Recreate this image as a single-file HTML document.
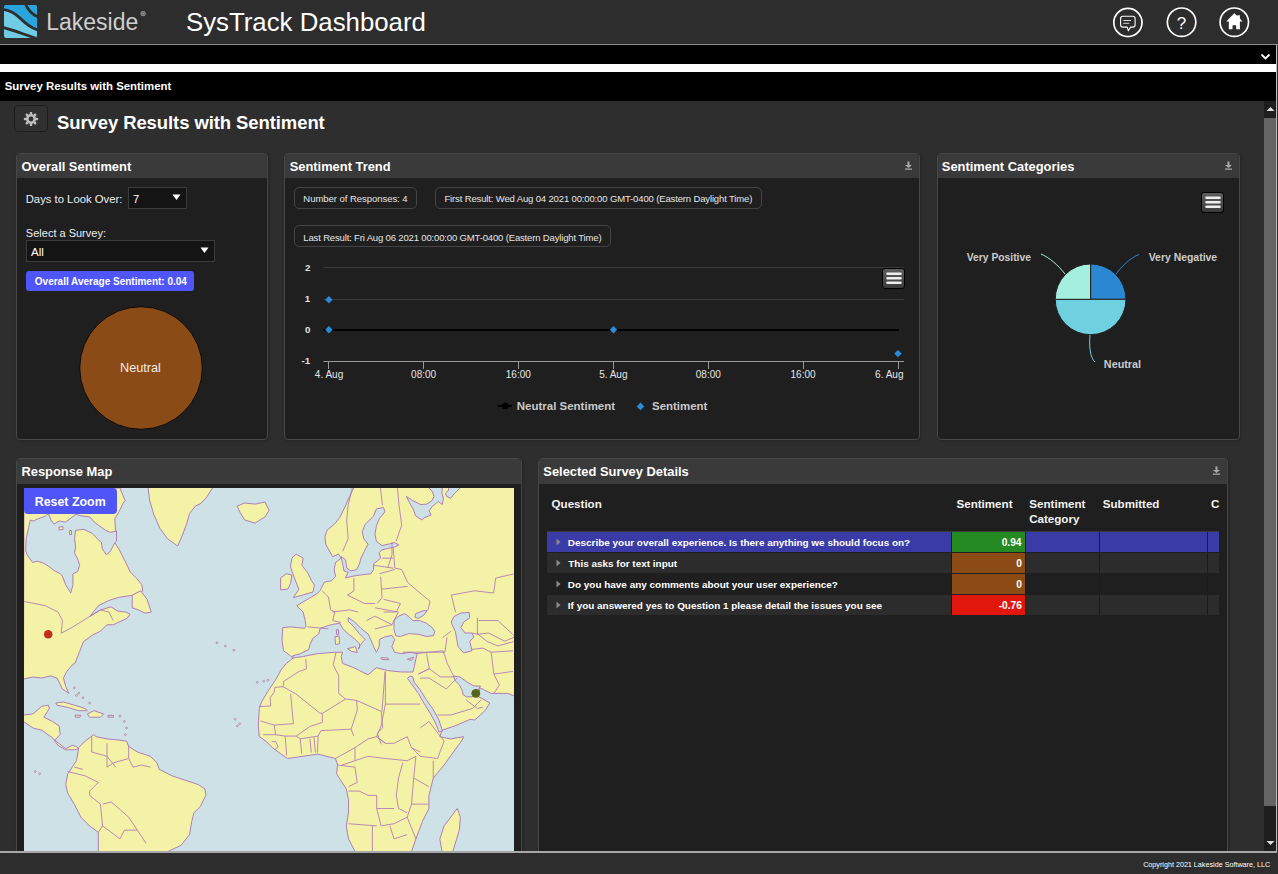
<!DOCTYPE html>
<html><head><meta charset="utf-8">
<style>
*{box-sizing:border-box;margin:0;padding:0}
html,body{width:1278px;height:874px;overflow:hidden;background:#2e2e2e;font-family:"Liberation Sans",sans-serif;color:#fff}
.a{position:absolute}
.panel{position:absolute;border:1px solid #474747;border-radius:4px;background:#1f1f1f;overflow:hidden;box-shadow:1px 1px 3px rgba(0,0,0,0.22)}
.ph{position:absolute;left:0;top:0;right:0;height:24px;background:#3a3a3a}
.pill{position:absolute;height:22px;border:1px solid #444;border-radius:5px}
.sel{position:absolute;background:#141414;border:1px solid #3c3c3c}
</style></head><body>
<div class="a" style="left:0;top:0;width:1278px;height:44px;background:#2d2d2d"></div>
<div class="a" style="left:0;top:44px;width:1278px;height:1px;background:#8c8c8c"></div>
<div class="a" style="left:0;top:45px;width:1276px;height:19px;background:#000"></div>
<div class="a" style="left:0;top:64px;width:1277px;height:8px;background:#fff"></div>
<div class="a" style="left:0;top:72px;width:1276px;height:29px;background:#000"></div>
<div class="a" style="left:1276px;top:45px;width:1px;height:807px;background:#bdbdbd"></div>
<div class="a" style="left:0;top:851px;width:1277px;height:2px;background:#a8a8a8"></div>
<div class="a" style="left:0;top:853px;width:1278px;height:21px;background:#2d2d2d"></div>

<svg class="a" style="left:4px;top:5px" width="34" height="34" viewBox="0 0 34 34">
  <defs><clipPath id="lc"><rect x="0" y="0" width="33" height="33" rx="2.5"/></clipPath></defs>
  <g clip-path="url(#lc)">
    <rect x="0" y="0" width="33" height="33" fill="#70cbe4"/>
    <path d="M-1 -1 H34 V25 C27 23 22 19 17 14 C12 9 6 5 -1 4.5 Z" fill="#2aa4dd"/>
    <path d="M-1 4.5 C6 5 12 9 17 14 C22 19 27 23 34 25" stroke="#2d2d2d" stroke-width="2.8" fill="none"/>
    <path d="M21.5 -1 C23.5 4 27.5 9 34 12" stroke="#2d2d2d" stroke-width="2.8" fill="none"/>
    <path d="M-1 22.5 C10 25 21 30 34 33.8" stroke="#2d2d2d" stroke-width="2.8" fill="none"/>
  </g>
</svg>
<svg class="a" style="left:139px;top:9px" width="9" height="9"><circle cx="4.1" cy="4.6" r="2.6" fill="#8e8e8e"/><circle cx="4.1" cy="4.6" r="1.3" fill="none" stroke="#555" stroke-width="0.6"/></svg>

<svg class="a" style="left:1112px;top:7px" width="140" height="32" viewBox="0 0 140 32">
  <circle cx="15.9" cy="15.5" r="14.1" stroke="#fff" stroke-width="1.7" fill="none"/>
  <path d="M10.9 9.2 h9.9 a2.3 2.3 0 0 1 2.3 2.3 v6.3 a2.3 2.3 0 0 1 -2.3 2.3 h-2.2 l-2.3 3.4 l-1.2 -3.4 h-4.2 a2.3 2.3 0 0 1 -2.3 -2.3 v-6.3 a2.3 2.3 0 0 1 2.3 -2.3z" stroke="#fff" stroke-width="1.1" fill="none"/>
  <path d="M11.3 13.5h7.8 M11.3 16.3h6" stroke="#ddd" stroke-width="1"/>
  <circle cx="69.6" cy="15.2" r="14.2" stroke="#fff" stroke-width="1.7" fill="none"/>
  <text x="69.6" y="21.9" text-anchor="middle" font-family="Liberation Sans" font-size="17" fill="#fff">?</text>
  <circle cx="122.3" cy="15.2" r="14.2" stroke="#fff" stroke-width="1.7" fill="none"/>
  <path d="M122.3 6.3 L125.3 9.1 V8.2 H127.9 V11.5 L130.5 14.5 H127.9 V22.3 H124.2 V18.6 Q122.3 17.4 120.5 18.6 V22.3 H116.8 V14.5 H114.2 Z" fill="#fff"/>
</svg>
<svg class="a" style="left:1260px;top:53px" width="11" height="8" viewBox="0 0 11 8"><path d="M1.5 1.5 L5.5 5.5 L9.5 1.5" stroke="#fff" stroke-width="1.8" fill="none"/></svg>

<div class="a" style="left:0;top:101px;width:1276px;height:750px;overflow:hidden">
<div class="a" style="left:0;top:-101px;width:1276px;height:851px">
<!-- scrollbar -->
<div class="a" style="left:1264px;top:101px;width:12px;height:750px;background:#1e1e1e"></div>
<div class="a" style="left:1264px;top:118px;width:12px;height:688px;background:#646464"></div>
<svg class="a" style="left:1265px;top:104px" width="11" height="10"><path d="M1.5 7 L5.5 3 L9.5 7Z" fill="#ddd"/></svg>
<svg class="a" style="left:1265px;top:838px" width="11" height="10"><path d="M1.5 3 L5.5 7 L9.5 3Z" fill="#ddd"/></svg>

<div class="a" style="left:14px;top:105px;width:34px;height:27px;border:1px solid #1c1c1c;border-radius:4px;background:#303030"></div>
<svg class="a" style="left:22px;top:110px" width="18" height="18" viewBox="0 0 18 18">
  <g transform="translate(9,9)" fill="#bfbfbf">
    <circle r="4.9"/>
    <g id="tooth"><rect x="-1.2" y="-7.1" width="2.4" height="3.2" rx="0.6"/></g>
    <use href="#tooth" transform="rotate(45)"/><use href="#tooth" transform="rotate(90)"/><use href="#tooth" transform="rotate(135)"/>
    <use href="#tooth" transform="rotate(180)"/><use href="#tooth" transform="rotate(225)"/><use href="#tooth" transform="rotate(270)"/><use href="#tooth" transform="rotate(315)"/>
    <circle r="2.4" fill="#303030"/>
  </g>
</svg>

<div class="panel" style="left:16px;top:153px;width:252px;height:287px"><div class="ph"></div></div>
<div class="panel" style="left:284px;top:153px;width:636px;height:287px"><div class="ph"></div></div>
<div class="panel" style="left:937px;top:153px;width:303px;height:287px"><div class="ph"></div></div>
<div class="panel" style="left:16px;top:458px;width:506px;height:430px"><div class="ph" style="height:25px"></div></div>
<div class="panel" style="left:538px;top:458px;width:690px;height:430px"><div class="ph" style="height:25px"></div></div>
<svg class="a" style="left:904px;top:161px" width="9" height="9"><path d="M3.5 0.5h2v3.5h2.5l-3.5 3l-3.5-3h2.5z M1 7.5h7v1.3h-7z" fill="#a8a8a8"/></svg><svg class="a" style="left:1224px;top:161px" width="9" height="9"><path d="M3.5 0.5h2v3.5h2.5l-3.5 3l-3.5-3h2.5z M1 7.5h7v1.3h-7z" fill="#a8a8a8"/></svg><svg class="a" style="left:1212px;top:466px" width="9" height="9"><path d="M3.5 0.5h2v3.5h2.5l-3.5 3l-3.5-3h2.5z M1 7.5h7v1.3h-7z" fill="#a8a8a8"/></svg>

<!-- P1 -->
<div class="sel" style="left:128px;top:187px;width:59px;height:22px"></div>
<svg class="a" style="left:172px;top:194px" width="9" height="7"><path d="M0.5 0.5 L8.5 0.5 L4.5 6Z" fill="#fff"/></svg>
<div class="sel" style="left:26px;top:240px;width:189px;height:22px"></div>
<svg class="a" style="left:200px;top:247px" width="9" height="7"><path d="M0.5 0.5 L8.5 0.5 L4.5 6Z" fill="#fff"/></svg>
<div class="a" style="left:26px;top:271px;width:168px;height:20px;background:#4f55f7;border-radius:3px"></div>
<svg class="a" style="left:79px;top:306px" width="124" height="124"><circle cx="62" cy="62" r="61.3" fill="#8b4b17" stroke="#0a0a0a" stroke-width="1"/></svg>

<!-- P2 -->
<div class="pill" style="left:294px;top:187px;width:123px"></div>
<div class="pill" style="left:435px;top:187px;width:327px"></div>
<div class="pill" style="left:294px;top:225px;width:317px"></div>
<svg class="a" style="left:285px;top:250px" width="634" height="180" viewBox="285 250 634 180">
  <path d="M323.5 267.5 H904 M323.5 299.5 H904" stroke="#3a3a3a" stroke-width="1"/>
  <path d="M323.5 361.5 H904" stroke="#9a9a9a" stroke-width="1"/>
  <path d="M328.5 361 V369 M423.5 361 V369 M518.5 361 V369 M613.5 361 V369 M708.5 361 V369 M803.5 361 V369 M898.5 361 V369" stroke="#9a9a9a" stroke-width="1"/>
  <path d="M323 330 H899" stroke="#000" stroke-width="2.2"/>
  <g fill="#2b8bd6">
    <path d="M328.9 296 L332.6 299.7 L328.9 303.4 L325.2 299.7Z"/>
    <path d="M328.9 326.1 L332.6 329.8 L328.9 333.5 L325.2 329.8Z"/>
    <path d="M613.5 326.1 L617.2 329.8 L613.5 333.5 L609.8 329.8Z"/>
    <path d="M898 349.9 L901.7 353.6 L898 357.3 L894.3 353.6Z"/>
    <path d="M640.5 402.6 L644.3 406.4 L640.5 410.2 L636.7 406.4Z"/>
  </g>
  <path d="M498 406 H512" stroke="#000" stroke-width="2"/>
  <circle cx="505.3" cy="406" r="3.2" fill="#000"/>
</svg>
<div class="a" style="left:882px;top:268px;width:23px;height:21px;border:1px solid #000;border-radius:3px;background:linear-gradient(#5e5e5e,#3a3a3a)"></div><svg class="a" style="left:886px;top:272px" width="16" height="13"><g stroke="#eee" stroke-width="2.6" stroke-linecap="round"><path d="M1.5 1.7 H14.5 M1.5 6.3 H14.5 M1.5 10.8 H14.5"/></g></svg>

<!-- P3 -->
<div class="a" style="left:1201px;top:192px;width:23px;height:21px;border:1px solid #000;border-radius:3px;background:linear-gradient(#5e5e5e,#3a3a3a)"></div><svg class="a" style="left:1205px;top:196px" width="16" height="13"><g stroke="#eee" stroke-width="2.6" stroke-linecap="round"><path d="M1.5 1.7 H14.5 M1.5 6.3 H14.5 M1.5 10.8 H14.5"/></g></svg>
<svg class="a" style="left:938px;top:178px" width="301" height="260" viewBox="938 178 301 260">
  <path d="M1090.6 299.3 L1090.6 263.9 A35.4 35.4 0 0 1 1126 299.3 Z" fill="#2b87d1" stroke="#1f1f1f" stroke-width="1"/>
  <path d="M1090.6 299.3 L1126 299.3 A35.4 35.4 0 0 1 1055.2 299.3 Z" fill="#6fd0e0" stroke="#1f1f1f" stroke-width="1"/>
  <path d="M1090.6 299.3 L1055.2 299.3 A35.4 35.4 0 0 1 1090.6 263.9 Z" fill="#a5efdf" stroke="#1f1f1f" stroke-width="1"/>
  <path d="M1041 254 C1050 258 1058 265 1065 274" stroke="#a5efdf" stroke-width="1" fill="none"/>
  <path d="M1139 254.5 C1130 258 1122 266 1116 274" stroke="#2b87d1" stroke-width="1" fill="none"/>
  <path d="M1090 335 C1089 345 1090 358 1095 362" stroke="#6fd0e0" stroke-width="1" fill="none"/>
</svg>

<!-- P4 map -->
<svg class="a" style="left:24px;top:488px" width="490" height="364" viewBox="0 0 490 364">
<rect width="490" height="364" fill="#cde1e7"/>
<path d="M0.0 0.0 L96.0 0.0 L98.0 5.2 L101.1 12.5 L99.0 15.5 L94.9 23.8 L90.8 31.0 L91.5 42.0 L90.8 54.7 L94.9 60.9 L99.0 69.1 L103.1 77.3 L106.1 83.8 L112.5 90.2 L117.8 96.5 L118.8 102.9 L110.4 107.1 L95.5 109.2 L84.9 112.4 L74.4 117.7 L65.9 128.3 L76.5 122.0 L87.1 118.8 L93.4 123.0 L101.9 124.1 L106.1 126.2 L102.9 130.4 L89.2 136.8 L82.8 136.8 L76.5 143.1 L68.0 147.4 L59.5 153.7 L55.3 164.3 L51.1 174.9 L48.2 177.0 L42.7 183.5 L39.5 190.0 L41.7 198.7 L44.9 205.3 L38.4 200.9 L33.0 190.0 L26.4 187.9 L17.7 190.0 L9.0 189.0 L-0.5 191.0ZM124.1 -0.5 L188.7 -0.5 L182.4 9.7 L176.0 16.0 L171.6 17.8 L165.6 25.3 L162.7 35.7 L158.2 47.6 L153.7 58.0 L143.3 50.6 L135.9 40.2 L129.9 26.8 L125.5 11.9ZM213.1 18.2 L220.5 15.0 L231.1 16.1 L241.0 14.0 L245.2 22.4 L241.0 28.8 L231.1 35.1 L220.5 31.9 L216.2 24.5ZM329.9 -0.5 L490.5 -0.5 L490.5 208.0 L483.6 205.4 L467.1 205.4 L456.1 199.9 L453.4 208.1 L458.9 210.9 L465.7 215.0 L461.6 221.8 L456.1 227.3 L450.6 232.0 L446.2 231.3 L431.0 237.9 L418.0 242.2 L415.8 248.7 L426.7 250.9 L439.7 248.7 L437.5 253.1 L431.0 261.8 L420.1 277.0 L409.3 290.0 L404.9 307.4 L404.9 320.5 L398.4 333.5 L391.9 350.9 L387.5 363.5 L331.0 363.5 L324.5 350.9 L322.3 337.9 L324.5 324.8 L324.5 311.8 L322.3 300.9 L318.0 294.4 L312.5 285.7 L313.6 277.0 L311.4 270.5 L302.7 268.3 L294.0 266.1 L278.8 268.3 L263.6 270.5 L257.1 266.1 L248.4 259.6 L241.9 253.1 L235.3 248.7 L234.3 237.9 L235.3 220.5 L237.5 214.0 L244.0 203.1 L252.7 190.0 L257.0 182.0 L262.3 175.5 L269.3 169.9 L264.0 166.0 L259.5 162.8 L258.0 152.0 L258.7 139.6 L266.5 138.9 L280.6 140.3 L282.0 138.0 L281.2 132.5 L279.1 124.0 L272.8 117.7 L286.2 109.7 L293.3 105.5 L296.1 102.6 L300.3 94.2 L307.3 92.8 L311.6 88.5 L310.2 81.5 L311.6 74.5 L317.2 70.2 L314.4 66.0 L308.7 68.8 L301.7 56.2 L301.0 49.1 L303.1 42.1 L310.2 36.4 L315.8 29.4 L321.4 18.1 L325.6 8.3ZM272.1 66.0 L279.2 70.2 L277.8 77.3 L283.4 84.3 L287.6 92.8 L290.4 97.0 L289.0 104.0 L279.2 106.9 L269.3 109.7 L274.9 101.2 L272.1 94.2 L269.3 87.1 L266.5 78.7 L267.9 70.2ZM256.6 90.0 L262.3 85.7 L267.9 87.1 L266.5 95.6 L263.7 101.2 L256.6 101.9ZM-0.5 227.0 L9.0 225.9 L17.7 218.3 L24.3 217.2 L25.3 220.5 L19.9 229.2 L28.6 233.5 L35.1 237.9 L36.2 246.6 L30.8 252.0 L37.3 257.4 L41.7 260.7 L48.2 257.4 L52.5 258.5 L54.7 260.7 L50.3 261.8 L41.7 261.8 L34.0 257.4 L28.6 249.8 L17.7 242.2 L9.0 240.0 L-0.5 233.5ZM54.7 259.6 L61.2 253.1 L69.9 246.6 L72.1 248.7 L83.0 250.9 L93.8 252.0 L102.5 253.1 L104.7 258.5 L113.4 264.0 L126.4 268.3 L133.0 274.8 L135.1 281.3 L148.2 287.9 L161.2 292.2 L174.3 296.6 L180.8 300.9 L181.9 307.4 L176.4 318.3 L169.9 324.8 L167.7 333.5 L165.6 346.6 L156.9 357.4 L143.8 363.5 L74.3 363.5 L74.3 344.4 L65.6 337.9 L56.9 329.2 L50.3 316.1 L43.8 305.3 L41.7 296.6 L43.8 285.7 L48.2 279.2 L52.5 272.7ZM433.2 320.5 L436.4 329.2 L435.3 342.2 L428.8 363.5 L418.0 363.5 L415.8 351.0 L420.1 337.9 L426.7 329.2Z" fill="#f3f2a7" stroke="#ad78b3" stroke-width="0.95" stroke-linejoin="round"/>
<path d="M6.3 32.0 L2.2 50.6 L1.7 62.9 L3.2 67.0 L8.4 74.3 L13.5 73.2 L19.7 75.3 L24.8 78.4 L30.0 82.5 L36.2 85.6 L38.4 88.1 L41.5 96.5 L46.8 105.0 L48.9 96.5 L48.9 85.9 L53.7 83.5 L55.7 77.3 L53.7 71.2 L50.6 65.0 L51.6 58.8 L50.6 50.6 L51.6 42.3 L59.9 41.3 L68.1 45.4 L73.3 50.6 L77.4 54.7 L78.4 60.9 L82.5 67.0 L86.6 62.9 L90.8 54.7 L92.5 53.0 L92.5 43.0 L86.6 44.4 L81.5 42.3 L70.2 34.1 L66.0 29.0 L57.8 27.9 L51.6 26.4 L44.4 32.0 L41.3 34.1 L35.1 33.0 L30.0 36.1 L26.9 32.0 L24.8 26.4 L23.3 26.4 L21.8 27.9 L16.6 30.0 L13.5 31.0 L9.4 33.0ZM317.0 68.5 L321.4 71.6 L322.8 80.1 L327.1 82.9 L332.7 81.5 L335.5 75.9 L336.9 70.2 L341.1 61.8 L344.0 56.2 L339.7 50.5 L338.3 43.5 L341.1 36.4 L349.6 28.0 L352.4 20.9 L359.5 19.5 L360.9 23.8 L355.2 30.8 L352.4 37.8 L351.0 46.3 L352.4 53.3 L358.0 57.6 L370.7 54.7 L374.9 56.9 L370.7 59.0 L363.7 60.4 L358.0 61.8 L355.2 64.6 L356.6 70.2 L349.6 75.9 L349.6 81.5 L346.8 85.7 L335.5 87.1 L327.1 88.5 L321.4 90.0 L324.2 84.3 L320.0 82.9 L318.6 75.9ZM268.6 167.8 L276.4 165.7 L284.8 161.4 L286.2 155.8 L289.0 150.2 L294.7 145.9 L296.1 140.3 L304.5 137.5 L310.2 136.1 L315.8 135.4 L318.6 140.3 L324.2 145.9 L329.9 150.2 L335.5 155.8 L335.5 160.0 L334.1 160.7 L338.3 154.4 L341.1 151.6 L335.5 145.9 L329.9 138.9 L324.2 133.3 L324.2 129.7 L329.9 133.3 L336.9 140.3 L344.0 145.9 L346.8 151.6 L349.6 158.6 L352.4 164.3 L355.2 158.6 L355.2 151.6 L360.9 148.8 L367.9 147.4 L370.7 151.6 L367.9 158.6 L370.7 164.3 L377.8 165.7 L386.2 164.3 L393.3 165.7 L391.8 171.3 L390.4 178.3 L389.0 184.0 L377.8 184.0 L363.7 182.6 L352.4 179.7 L344.0 186.8 L335.5 182.6 L329.9 179.7 L318.6 175.5 L317.2 168.5 L318.6 164.3 L310.2 164.3 L293.3 165.7 L279.2 168.5 L269.3 169.9ZM370.0 132.0 L375.0 128.0 L380.6 125.7 L384.7 128.5 L388.8 132.6 L395.7 132.6 L402.6 135.3 L408.1 139.5 L410.8 143.6 L409.4 147.7 L402.6 148.4 L394.3 146.3 L384.7 145.6 L376.5 148.4 L372.0 148.0 L370.0 142.0ZM391.6 125.7 L398.5 123.0 L403.3 122.3 L399.8 127.1 L394.3 130.5 L390.9 129.2ZM427.3 134.0 L430.0 128.5 L436.9 125.0 L445.1 124.4 L445.8 129.8 L439.7 134.0 L436.9 139.5 L441.0 145.0 L447.9 145.0 L450.0 149.1 L445.8 153.2 L447.9 162.8 L439.7 164.9 L434.2 158.7 L432.8 151.8 L431.4 143.6 L428.7 138.1ZM383.4 190.3 L387.5 195.8 L394.3 205.4 L399.8 215.0 L406.7 226.0 L412.0 236.0 L415.0 244.0 L418.5 243.0 L414.9 232.0 L409.4 221.8 L402.6 212.2 L395.7 201.2 L390.2 194.4 L388.8 188.9 L386.0 188.0ZM429.5 188.0 L436.0 189.0 L443.0 194.0 L450.0 198.0 L456.5 198.0 L453.4 202.6 L452.0 206.7 L447.9 208.8 L442.4 208.8 L439.0 206.7 L438.3 202.6 L435.5 197.1 L431.4 193.0ZM382.3 8.3 L388.5 12.5 L396.8 16.6 L402.9 16.1 L408.1 12.5 L410.1 8.3 L408.1 3.2 L404.0 -1.0 L418.4 -1.0 L417.9 5.2 L419.4 10.4 L418.4 16.6 L414.3 13.5 L408.1 18.6 L405.0 22.8 L407.1 26.9 L399.8 30.0 L397.8 32.0 L391.6 27.9 L389.5 21.7 L385.4 14.5ZM424.6 -1.0 L436.9 -1.0 L430.7 5.2 L426.6 10.4 L422.5 8.3 L421.5 5.2 L424.6 2.2Z" fill="#cde1e7" stroke="#ad78b3" stroke-width="0.95" stroke-linejoin="round"/>
<path d="M108.2 107.1 L116.7 102.9 L123.1 111.4 L127.3 124.1 L121.0 125.1 L114.6 122.0 L108.2 119.8ZM35.0 39.0 L39.0 38.5 L39.0 41.5 L35.0 42.0ZM45.5 42.5 L47.5 42.5 L47.5 46.5 L45.5 46.5ZM31.9 215.0 L39.5 214.0 L50.3 217.2 L61.2 220.5 L63.4 222.7 L54.7 222.7 L43.8 219.4 L33.0 217.2ZM63.4 225.9 L69.9 222.7 L79.7 225.9 L76.4 229.2 L65.6 229.2ZM51.4 227.0 L56.9 227.4 L55.8 229.2 L51.4 229.2ZM84.0 227.4 L89.5 227.4 L89.5 229.2 L84.0 229.2ZM323.5 160.7 L331.3 158.6 L333.4 164.3 L327.8 163.5ZM310.9 148.8 L315.1 148.1 L315.5 155.8 L311.6 156.5ZM312.3 141.7 L314.4 141.7 L314.7 146.6 L312.7 146.6ZM356.6 169.9 L363.7 169.9 L365.1 171.6 L358.0 171.6ZM383.4 171.3 L389.7 169.2 L387.6 172.4Z" fill="#f3f2a7" stroke="#ad78b3" stroke-width="0.95" stroke-linejoin="round"/>
<g fill="none" stroke="#ad78b3" stroke-width="0.85" transform="translate(-24,-488)"><path d="M305.8 659.2 L306.5 668.8 L298.9 671.6 L283.8 681.2 L283.1 686.7"/><path d="M283.1 686.7 L274.9 687.4 L274.2 692.2 L270.1 697.7 L270.8 705.9 L259.1 706.6"/><path d="M283.1 686.7 L296.2 694.2 L319.5 712.8 L322.3 713.4"/><path d="M290.7 694.2 L293.4 723.7 L274.2 725.1"/><path d="M322.3 713.4 L345.6 699.0 L356.6 700.4 L381.3 711.4"/><path d="M336.0 652.4 L333.2 664.7 L338.7 675.7 L338.7 693.5 L345.6 699.0"/><path d="M356.6 700.4 L357.3 710.0 L351.1 729.2 L353.8 736.1"/><path d="M322.3 713.4 L322.3 722.4 L309.9 726.5 L296.2 736.1"/><path d="M260.5 721.0 L274.2 725.1 L275.6 734.7 L263.2 734.7"/><path d="M275.6 734.7 L285.2 736.1 L286.6 755.3"/><path d="M300.3 738.8 L301.7 753.9"/><path d="M309.9 738.8 L311.3 752.6"/><path d="M314.0 737.5 L315.4 752.6"/><path d="M318.1 736.1 L317.5 752.6"/><path d="M285.2 736.1 L296.2 736.1 L300.3 738.8 L318.1 736.1 L320.9 730.6 L351.1 729.2"/><path d="M381.3 711.4 L382.7 727.9 L377.2 733.3 L381.3 744.3"/><path d="M385.0 671.6 L382.0 711.4"/><path d="M271.5 741.6 L275.6 741.6 L278.3 747.1 L274.2 749.8"/><path d="M385.4 671.5 L385.4 704.1 L420.2 704.1"/><path d="M385.4 704.1 L381.1 725.9 L376.7 736.7 L385.4 743.3"/><path d="M355.0 747.6 L368.0 738.9 L376.7 736.7 L385.4 743.3 L394.1 743.3 L407.2 736.7"/><path d="M355.0 760.7 L368.0 756.3 L385.4 758.5 L407.2 760.7 L415.9 756.3"/><path d="M407.2 736.7 L411.5 747.6 L420.2 752.0"/><path d="M420.2 728.0 L428.9 721.5 L444.1 741.1 L437.6 758.5 L420.2 756.3 L411.5 747.6"/><path d="M433.3 760.7 L433.3 778.0"/><path d="M402.8 762.8 L398.5 778.0 L396.3 795.4 L398.5 808.5 L407.2 812.8"/><path d="M348.5 791.1 L359.3 791.1 L368.0 795.4 L376.7 795.4 L376.7 808.5 L394.1 808.5"/><path d="M413.7 778.0 L428.9 786.7"/><path d="M411.5 804.1 L428.9 804.1"/><path d="M376.7 808.5 L381.1 825.9 L394.1 823.7 L407.2 817.2 L411.5 804.1"/><path d="M348.5 823.7 L376.7 825.9"/><path d="M372.4 825.9 L372.4 850.9"/><path d="M389.8 825.9 L394.1 838.9 L407.2 834.6"/><path d="M407.2 817.2 L415.9 838.9"/><path d="M337.6 765.0 L355.0 767.2 L357.2 782.4 L348.5 786.7"/><path d="M335.4 758.5 L355.0 747.6 L355.0 760.7 L342.0 765.0"/><path d="M415.9 756.3 L413.7 778.0 L411.5 804.1"/><path d="M437.6 715.0 L450.7 715.0 L472.4 708.5 L481.1 699.8"/><path d="M420.2 678.0 L428.9 678.0 L446.3 688.9 L457.2 678.0"/><path d="M380.4 488.0 L382.5 505.1"/><path d="M352.4 488.0 L348.2 504.7 L346.7 520.1 L348.2 538.6 L342.7 551.3"/><path d="M397.5 488.0 L399.0 505.1 L401.7 525.2 L396.2 541.1"/><path d="M307.3 626.8 L328.5 628.9"/><path d="M322.2 590.8 L328.5 597.2 L330.6 609.9 L334.9 612.0 L332.7 620.5 L341.2 622.6"/><path d="M353.9 578.1 L353.9 590.8 L347.6 595.1"/><path d="M347.6 595.1 L364.5 603.5 L375.1 603.5"/><path d="M332.7 612.0 L349.7 609.9 L358.1 612.0"/><path d="M382.1 558.2 L393.3 558.2"/><path d="M373.6 565.2 L393.3 568.2"/><path d="M379.3 573.7 L394.8 569.5"/><path d="M380.6 576.7 L382.1 597.6 L377.2 603.5"/><path d="M393.3 548.3 L394.8 568.2 L401.7 569.5 L407.5 582.2 L417.4 590.8 L430.1 601.4 L428.0 609.9"/><path d="M382.1 589.1 L407.5 586.4"/><path d="M383.5 599.3 L400.5 603.5 L396.2 612.0 L383.5 612.0"/><path d="M375.1 607.8 L398.4 612.0 L392.0 624.7 L375.1 628.9"/><path d="M366.6 620.5 L375.1 616.2 L383.5 620.5 L392.0 624.7"/><path d="M451.3 595.1 L474.6 590.8 L493.6 593.0 L495.7 578.1 L513.7 573.9"/><path d="M451.3 595.1 L455.5 612.0"/><path d="M478.8 620.5 L497.9 620.5 L513.7 635.3"/><path d="M476.7 633.2 L487.3 641.6 L497.9 645.9 L513.7 641.6"/><path d="M402.6 652.2 L444.9 652.2 L447.0 637.4"/><path d="M442.8 637.4 L451.3 631.1"/><path d="M392.0 542.2 L392.0 554.9 L387.8 567.6"/><path d="M417.0 653.5 L429.3 652.2 L443.1 650.8"/><path d="M443.1 650.8 L447.2 663.2 L454.0 676.9"/><path d="M426.6 653.5 L429.3 668.7 L418.3 674.1"/><path d="M418.3 674.1 L429.3 668.7 L440.3 676.9 L454.0 676.9"/><path d="M491.1 652.2 L493.9 674.1 L499.4 685.1 L493.9 693.4"/><path d="M477.4 617.8 L477.4 634.3 L471.9 633.0"/><path d="M477.4 634.3 L488.4 633.0 L504.8 641.2 L514.5 637.1"/><path d="M471.9 649.4 L482.9 648.1 L491.1 652.2 L513.1 650.8"/><path d="M493.9 674.1 L513.1 671.4"/><path d="M466.4 700.2 L477.4 708.5 L482.9 707.1"/><path d="M91.7 736.7 L91.7 752.0 L107.0 756.3 L107.0 767.2"/><path d="M107.0 767.2 L113.5 762.8 L128.7 758.5 L128.7 745.4"/><path d="M128.7 758.5 L133.0 767.2 L141.7 765.0 L150.4 767.2"/><path d="M67.8 771.5 L85.2 775.9 L98.3 782.4 L89.6 791.1 L89.6 795.4 L100.4 804.1"/><path d="M74.3 767.2 L83.0 769.3"/><path d="M100.4 804.1 L102.6 825.9 L98.3 832.4"/><path d="M102.6 804.1 L111.3 802.0 L128.7 817.2 L137.4 830.2 L146.1 843.3"/><path d="M102.6 825.9 L120.0 838.9 L124.3 830.2 L137.4 830.2"/><path d="M107.0 743.3 L107.0 756.3 L115.7 767.2"/><path d="M24.2 601.5 L45.4 605.7 L58.1 612.1 L62.4 620.5 L61.3 633.2 L72.9 626.9 L89.9 616.3 L100.5 609.9"/><path d="M100.5 609.9 L108.9 612.1 L113.2 620.5"/></g>
<g fill="#f3f2a7" stroke="#ad78b3" stroke-width="0.8" transform="translate(-24,-488)"><circle cx="74.3" cy="687.8" r="0.9"/><circle cx="78.7" cy="693.3" r="0.9"/><circle cx="83.0" cy="697.6" r="0.9"/><circle cx="89.6" cy="703.0" r="0.9"/><circle cx="76.5" cy="695.4" r="0.9"/><circle cx="120.0" cy="716.1" r="0.9"/><circle cx="124.3" cy="721.5" r="0.9"/><circle cx="126.5" cy="728.0" r="0.9"/><circle cx="125.4" cy="734.6" r="0.9"/><circle cx="235.2" cy="719.3" r="0.9"/><circle cx="239.6" cy="723.7" r="0.9"/><circle cx="237.4" cy="725.9" r="0.9"/><circle cx="35.2" cy="771.5" r="0.9"/><circle cx="39.6" cy="773.7" r="0.9"/><circle cx="257.2" cy="682.4" r="0.9"/><circle cx="263.7" cy="681.3" r="0.9"/><circle cx="268.0" cy="680.2" r="0.9"/><circle cx="217.0" cy="642.8" r="0.9"/><circle cx="225.4" cy="646.0" r="0.9"/><circle cx="233.9" cy="650.2" r="0.9"/></g>
<circle cx="24.200000000000003" cy="146.29999999999995" r="4.3" fill="#c0301a"/>
<circle cx="451.8" cy="205.29999999999995" r="4.4" fill="#56661a"/>
</svg>
<div class="a" style="left:24px;top:488px;width:93px;height:26px;background:#4f55f7;border-radius:0 4px 4px 4px"></div>

<!-- P5 rows -->
<div class="a" style="left:547px;top:531px;width:672px;height:1px;background:#3a3a3a"></div>
<div class="a" style="left:547px;top:532px;width:672px;height:20px;background:#3b3ba8"></div>
<div class="a" style="left:952px;top:532px;width:73px;height:20px;background:#268a22"></div>
<div class="a" style="left:951px;top:532px;width:1px;height:20px;background:#1c1c1c"></div>
<div class="a" style="left:1025px;top:532px;width:1px;height:20px;background:#1c1c1c"></div>
<div class="a" style="left:1099px;top:532px;width:1px;height:20px;background:#1c1c1c"></div>
<div class="a" style="left:1207px;top:532px;width:1px;height:20px;background:#1c1c1c"></div>
<svg class="a" style="left:556px;top:538px" width="5" height="8"><path d="M0.5 0.5 L4.5 4 L0.5 7.5Z" fill="#8a8a8a"/></svg>
<div class="a" style="left:547px;top:553px;width:672px;height:20px;background:#2c2c2c"></div>
<div class="a" style="left:952px;top:553px;width:73px;height:20px;background:#8c4a15"></div>
<div class="a" style="left:951px;top:553px;width:1px;height:20px;background:#1c1c1c"></div>
<div class="a" style="left:1025px;top:553px;width:1px;height:20px;background:#1c1c1c"></div>
<div class="a" style="left:1099px;top:553px;width:1px;height:20px;background:#1c1c1c"></div>
<div class="a" style="left:1207px;top:553px;width:1px;height:20px;background:#1c1c1c"></div>
<svg class="a" style="left:556px;top:559px" width="5" height="8"><path d="M0.5 0.5 L4.5 4 L0.5 7.5Z" fill="#8a8a8a"/></svg>
<div class="a" style="left:547px;top:574px;width:672px;height:20px;background:#1f1f1f"></div>
<div class="a" style="left:952px;top:574px;width:73px;height:20px;background:#8c4a15"></div>
<div class="a" style="left:951px;top:574px;width:1px;height:20px;background:#1c1c1c"></div>
<div class="a" style="left:1025px;top:574px;width:1px;height:20px;background:#1c1c1c"></div>
<div class="a" style="left:1099px;top:574px;width:1px;height:20px;background:#1c1c1c"></div>
<div class="a" style="left:1207px;top:574px;width:1px;height:20px;background:#1c1c1c"></div>
<svg class="a" style="left:556px;top:580px" width="5" height="8"><path d="M0.5 0.5 L4.5 4 L0.5 7.5Z" fill="#8a8a8a"/></svg>
<div class="a" style="left:547px;top:595px;width:672px;height:20px;background:#2c2c2c"></div>
<div class="a" style="left:952px;top:595px;width:73px;height:20px;background:#e1170e"></div>
<div class="a" style="left:951px;top:595px;width:1px;height:20px;background:#1c1c1c"></div>
<div class="a" style="left:1025px;top:595px;width:1px;height:20px;background:#1c1c1c"></div>
<div class="a" style="left:1099px;top:595px;width:1px;height:20px;background:#1c1c1c"></div>
<div class="a" style="left:1207px;top:595px;width:1px;height:20px;background:#1c1c1c"></div>
<svg class="a" style="left:556px;top:601px" width="5" height="8"><path d="M0.5 0.5 L4.5 4 L0.5 7.5Z" fill="#8a8a8a"/></svg>

</div></div>
<svg class="a" style="left:0;top:0" width="1278" height="874" font-family="Liberation Sans"><text x="46.26" y="30.40" font-size="23" fill="#cfcfcf">Lakeside</text>
<text x="185.97" y="31.30" font-size="25.8" fill="#ffffff">SysTrack Dashboard</text>
<text x="4.77" y="89.90" font-size="11.4" font-weight="bold" fill="#ffffff">Survey Results with Sentiment</text>
<text x="56.93" y="128.80" font-size="18.5" font-weight="bold" letter-spacing="-0.09" fill="#ffffff">Survey Results with Sentiment</text>
<text x="21.58" y="170.80" font-size="12.9" font-weight="bold" fill="#ffffff">Overall Sentiment</text>
<text x="289.64" y="170.60" font-size="12.9" font-weight="bold" fill="#ffffff">Sentiment Trend</text>
<text x="941.84" y="170.80" font-size="12.9" font-weight="bold" fill="#ffffff">Sentiment Categories</text>
<text x="21.43" y="475.70" font-size="12.9" font-weight="bold" fill="#ffffff">Response Map</text>
<text x="543.34" y="475.80" font-size="12.9" font-weight="bold" fill="#ffffff">Selected Survey Details</text>
<text x="25.70" y="203.20" font-size="11.3" fill="#eeeeee">Days to Look Over:</text>
<text x="132.94" y="203.20" font-size="11.2" fill="#ffffff">7</text>
<text x="25.86" y="237.10" font-size="11.0" fill="#eeeeee">Select a Survey:</text>
<text x="31.00" y="255.90" font-size="11.6" fill="#ffffff">All</text>
<text x="34.80" y="285.20" font-size="10.0" font-weight="bold" fill="#ffffff">Overall Average Sentiment: 0.04</text>
<text x="119.98" y="372.40" font-size="12.7" fill="#f2ece6">Neutral</text>
<text x="303.34" y="202.30" font-size="9.5" letter-spacing="-0.04" fill="#e6e6e6">Number of Responses: 4</text>
<text x="444.44" y="202.30" font-size="9.5" letter-spacing="-0.14" fill="#e6e6e6">First Result: Wed Aug 04 2021 00:00:00 GMT-0400 (Eastern Daylight Time)</text>
<text x="303.34" y="240.50" font-size="9.5" letter-spacing="-0.155" fill="#e6e6e6">Last Result: Fri Aug 06 2021 00:00:00 GMT-0400 (Eastern Daylight Time)</text>
<text x="304.90" y="270.90" font-size="9.8" font-weight="bold" fill="#e0e0e0">2</text>
<text x="304.81" y="302.00" font-size="9.8" font-weight="bold" fill="#e0e0e0">1</text>
<text x="304.90" y="333.10" font-size="9.8" font-weight="bold" fill="#e0e0e0">0</text>
<text x="301.54" y="363.70" font-size="9.8" font-weight="bold" fill="#e0e0e0">-1</text>
<text x="314.83" y="377.80" font-size="10.0" fill="#e6e6e6">4. Aug</text>
<text x="411.12" y="377.80" font-size="10.0" fill="#e6e6e6">08:00</text>
<text x="505.82" y="377.80" font-size="10.0" fill="#e6e6e6">16:00</text>
<text x="599.13" y="377.80" font-size="10.0" fill="#e6e6e6">5. Aug</text>
<text x="695.82" y="377.80" font-size="10.0" fill="#e6e6e6">08:00</text>
<text x="790.52" y="377.80" font-size="10.0" fill="#e6e6e6">16:00</text>
<text x="875.08" y="377.80" font-size="10.0" fill="#e6e6e6">6. Aug</text>
<text x="516.71" y="409.90" font-size="11.5" font-weight="bold" fill="#c9c9c9">Neutral Sentiment</text>
<text x="652.07" y="409.90" font-size="11.45" font-weight="bold" fill="#c9c9c9">Sentiment</text>
<text x="966.80" y="260.60" font-size="10.3" font-weight="bold" fill="#cccccc">Very Positive</text>
<text x="1148.70" y="260.60" font-size="10.45" font-weight="bold" fill="#cccccc">Very Negative</text>
<text x="1103.85" y="368.20" font-size="10.8" font-weight="bold" fill="#cccccc">Neutral</text>
<text x="34.76" y="506.10" font-size="12.4" font-weight="bold" fill="#ffffff">Reset Zoom</text>
<text x="551.54" y="508.10" font-size="11.6" font-weight="bold" fill="#f2f2f2">Question</text>
<text x="956.47" y="508.10" font-size="11.6" font-weight="bold" fill="#f2f2f2">Sentiment</text>
<text x="1029.37" y="508.10" font-size="11.6" font-weight="bold" fill="#f2f2f2">Sentiment</text>
<text x="1102.77" y="508.10" font-size="11.6" font-weight="bold" fill="#f2f2f2">Submitted</text>
<text x="1029.14" y="523.20" font-size="11.6" font-weight="bold" fill="#f2f2f2">Category</text>
<text x="1211.04" y="508.10" font-size="11.6" font-weight="bold" fill="#f2f2f2">C</text>
<text x="567.80" y="546.30" font-size="9.95" font-weight="bold" fill="#ffffff">Describe your overall experience. Is there anything we should focus on?</text>
<text x="1001.71" y="546.30" font-size="10.2" font-weight="bold" fill="#ffffff">0.94</text>
<text x="568.30" y="567.30" font-size="9.95" font-weight="bold" fill="#ffffff">This asks for text input</text>
<text x="1016.30" y="567.30" font-size="10.2" font-weight="bold" fill="#ffffff">0</text>
<text x="567.80" y="588.30" font-size="9.95" font-weight="bold" fill="#ffffff">Do you have any comments about your user experience?</text>
<text x="1016.30" y="588.30" font-size="10.2" font-weight="bold" fill="#ffffff">0</text>
<text x="567.80" y="609.30" font-size="9.95" font-weight="bold" fill="#ffffff">If you answered yes to Question 1 please detail the issues you see</text>
<text x="998.72" y="609.30" font-size="10.2" font-weight="bold" fill="#ffffff">-0.76</text>
<text x="1143.14" y="866.90" font-size="7.2" fill="#ffffff">Copyright 2021 Lakeside Software, LLC</text></svg>
</body></html>
